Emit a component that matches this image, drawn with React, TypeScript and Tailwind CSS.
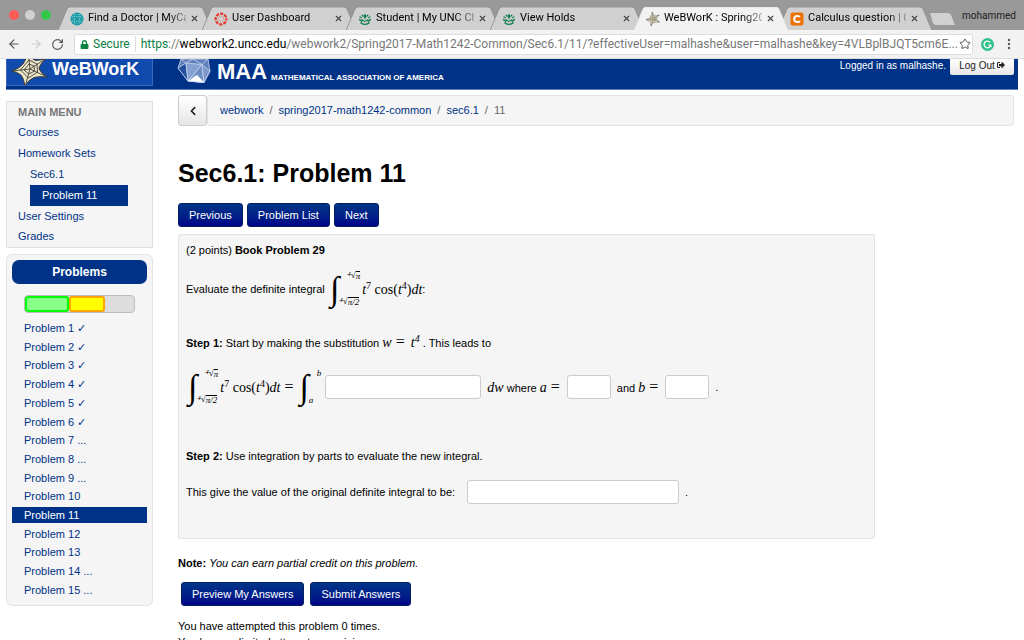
import type { ReactNode } from "react";
import { ArrowLeft, ArrowRight, RotateCw, Star, X } from "lucide-react";
import { FaChevronLeft, FaLock, FaSignOutAlt } from "react-icons/fa";

interface TabProps {
  title: string;
  icon: ReactNode;
  active?: boolean;
}

const MyCareIcon = () => (
  <svg viewBox="0 0 14 14" className="size-[14px] shrink-0">
    <circle cx="7" cy="7" r="6.5" fill="#1b9aa5" />
    <g fill="none" stroke="#8fd3d6" strokeWidth=".6">
      <circle cx="7" cy="7" r="4.6" strokeDasharray="1 1" />
      <circle cx="7" cy="7" r="2.4" strokeDasharray="1 1" />
      <path d="M2 4.5h10M2 9.5h10M4.5 2v10M9.5 2v10" strokeDasharray="1 1" />
    </g>
  </svg>
);

const CanvasIcon = () => (
  <svg viewBox="0 0 14 14" className="size-[14px] shrink-0">
    <circle cx="7" cy="7" r="5.4" fill="none" stroke="#e23b2e" strokeWidth="2.2" strokeDasharray="3.2 1.04" strokeDashoffset="1.6" />
    <circle cx="7" cy="7" r="2.9" fill="none" stroke="#e23b2e" strokeWidth=".9" strokeDasharray=".9 1.38" />
  </svg>
);

const UncIcon = () => (
  <svg viewBox="0 0 14 14" className="size-[14px] shrink-0" fill="none" stroke="#0c7a4a">
    <path d="M1 7.500c2 0 2.500 1.500 3 2.500M13 7.500c-2 0-2.500 1.500-3 2.500" strokeWidth="1.3" />
    <path d="M2.500 10.500c2 2.500 7 2.500 9 0" strokeWidth="1.3" />
    <path d="M4 7c.6 3 5.400 3 6 0" strokeWidth="1.1" />
    <path d="M1.500 4.800l2.500 1M12.500 4.800l-2.500 1M3.800 2.800l1.700 1.700M10.200 2.800L8.500 4.500" strokeWidth="1.2" />
    <path d="M7 1.5l1.4 2.4L7 7.8 5.6 3.9z" fill="#0c7a4a" stroke="none" />
  </svg>
);

const CheggIcon = () => (
  <svg viewBox="0 0 14 14" className="size-[14px] shrink-0">
    <rect x=".5" y=".5" width="13" height="13" rx="2" fill="#eb7100" />
    <path d="M9.8 5.2C9 3.4 4.2 3.2 4.2 7s4.8 3.6 5.6 1.8" fill="none" stroke="#fff" strokeWidth="2" />
  </svg>
);

const WebIcon = ({ className }: { className: string }) => (
  <svg viewBox="0 0 36 36" className={className}>
    <path
      d="M16 0Q18 8 24 9.500Q29 9 34 7.500Q27 14 27 18Q29 22 35 26Q25 25 21 27Q15 30 13 36Q12 27 9 24Q5 21 0 20Q8 17 11 13Q15 8 16 0z"
      fill="#ece6c8"
      stroke="#3d3d35"
      strokeWidth="1"
    />
    <g fill="none" stroke="#3d3d35" strokeWidth=".9">
      <path d="M18 18L16 0M18 18L34 7.500M18 18L35 26M18 18L13 36M18 18L0 20" />
      <path d="M17 13l5 2 .5 5-5.500 3-5-4z" />
      <path d="M17 9l8 4 .5 8-9 6-8-8z" />
    </g>
  </svg>
);

const MaaIcon = () => (
  <svg viewBox="0 0 36 25" className="h-[25px] w-9">
    <g stroke="#c9d6ee" strokeWidth=".8" strokeLinejoin="round">
      <path d="M4 0L1 9l10 13 16 1.500L33 12 31 0z" fill="#5f80bd" />
      <path d="M9 4L1 9l10 13z" fill="#23509d" />
      <path d="M9 4l16 1.500L11 22z" fill="#86a1d1" />
      <path d="M25 5.500L11 22l16 1.500z" fill="#6f8dc6" />
      <path d="M20 16L11 22l16 1.500z" fill="#fff" />
      <path d="M25 5.500L33 12l-6 11.500z" fill="#7c98cb" />
      <path d="M9 4l7-4M25 5.500L16 0M25 5.500L31 0M9 4L4 0" fill="none" />
    </g>
  </svg>
);

const Tab = ({ title, icon, active = false }: TabProps) => (
  <div className={`relative -mr-[10px] h-[23px] w-[154px] shrink-0 ${active ? "z-10" : ""}`}>
    <svg viewBox="0 0 154 23" preserveAspectRatio="none" className="absolute inset-0 h-full w-full">
      <path
        d="M0 23L1 21L9 2Q10 0 12 0H142Q144 0 145 2L153 21L154 23"
        fill={active ? "#f2f2f2" : "#d0d0d0"}
        stroke={active ? "#e4e4e4" : "#8a8a8a"}
        strokeWidth=".8"
      />
    </svg>
    <div className="relative flex h-full items-center gap-1 pl-3 pr-[13px]">
      {icon}
      <span className="min-w-0 flex-1 whitespace-nowrap bg-linear-to-r from-black from-80% to-black/30 bg-clip-text text-[11px] text-transparent">
        {title}
      </span>
      <button aria-label={`Close ${title}`}>
        <X className="size-[9px] text-[#444]" strokeWidth={3} />
      </button>
    </div>
  </div>
);

const BrowserBar = () => (
  <div className="shrink-0 font-['Roboto','Noto_Sans',sans-serif]">
    <div className="flex h-[30px] bg-[#999]">
      <div className="flex w-[58px] shrink-0 items-center gap-[6px] pl-[9px]">
        <span className="size-[10px] rounded-full bg-[#fc5b57]" />
        <span className="size-[10px] rounded-full bg-[#d0d0d0]" />
        <span className="size-[10px] rounded-full bg-[#34c84a]" />
      </div>
      <div className="flex items-end">
        <Tab title="Find a Doctor | MyCar" icon={<MyCareIcon />} />
        <Tab title="User Dashboard" icon={<CanvasIcon />} />
        <Tab title="Student | My UNC Cha" icon={<UncIcon />} />
        <Tab title="View Holds" icon={<UncIcon />} />
        <Tab title="WeBWorK : Spring201" icon={<WebIcon className="size-[14px] shrink-0" />} active />
        <Tab title="Calculus question | Ch" icon={<CheggIcon />} />
      </div>
      <svg viewBox="0 0 26 12" className="ml-[7px] mt-[13px] h-3 w-[26px] shrink-0">
        <path d="M1 0H19Q21 0 22 2L26 12H7Q5 12 4 10z" fill="#d0d0d0" />
      </svg>
      <span className="ml-auto mr-2 mt-2 text-[10px] leading-4 text-[#222]">mohammed</span>
    </div>
    <div className="flex h-[29px] items-center border-b border-[#ddd] bg-[#f2f2f2]">
      <div className="flex w-[74px] shrink-0 items-center gap-2 pl-[7px]">
        <button aria-label="Back"><ArrowLeft className="size-[14px] text-[#555]" /></button>
        <button aria-label="Forward"><ArrowRight className="size-[14px] text-[#ccc]" /></button>
        <button aria-label="Reload"><RotateCw className="size-[13px] text-[#555]" /></button>
      </div>
      <div className="flex h-[21px] min-w-0 flex-1 items-center rounded-xs border border-[#ddd] bg-white pl-[5px] pr-px text-[12px]">
        <FaLock className="size-[9px] shrink-0 text-[#0b8043]" />
        <span className="ml-1 text-[#0b8043]">Secure</span>
        <span className="mx-[5px] h-4 w-px bg-[#ddd]" />
        <span className="min-w-0 flex-1 whitespace-nowrap text-[#777]">
          <span className="text-[#0b8043]">https</span>://<span className="text-black">webwork2.uncc.edu</span>
          /webwork2/Spring2017-Math1242-Common/Sec6.1/11/?effectiveUser=malhashe&user=malhashe&key=4VLBplBJQT5cm6E...
        </span>
        <button aria-label="Bookmark this page"><Star className="size-3 text-[#555]" /></button>
      </div>
      <svg viewBox="0 0 12 12" className="ml-2 size-[13px] shrink-0">
        <circle cx="6" cy="6" r="6" fill="#2fc08b" />
        <path d="M8.500 4.200A3.100 3.100 0 1 0 9 6.500H6.800M9 6.500V8.500" fill="none" stroke="#fff" strokeWidth="1.200" />
      </svg>
      <button aria-label="Browser menu" className="mx-[13px]">
        <svg viewBox="0 0 4 14" className="h-[14px] w-1" fill="#555">
          <circle cx="2" cy="3" r="1.200" />
          <circle cx="2" cy="7" r="1.200" />
          <circle cx="2" cy="11" r="1.200" />
        </svg>
      </button>
    </div>
  </div>
);

const Header = () => (
  <header className="mx-[6px] flex h-[31px] items-start border-b border-[#5f7fc0] bg-[#003388] text-white">
    <a href="#" className="flex h-[27px] w-[147px] items-start gap-1 overflow-hidden border border-t-0 border-[#3a68bd] bg-[#104aad] pl-[5px]">
      <WebIcon className="-mt-2 size-9 shrink-0" />
      <span className="text-[18px] font-bold leading-5">WeBWorK</span>
    </a>
    <a href="#" className="ml-6 flex items-start font-bold">
      <MaaIcon />
      <span className="ml-1 text-[22px] leading-[26px]">MAA</span>
      <span className="ml-1 pt-[11px] text-[8px] leading-4">MATHEMATICAL ASSOCIATION OF AMERICA</span>
    </a>
    <div className="ml-auto mr-1 flex items-start gap-1 text-[10px]">
      <span className="leading-[14px]">Logged in as malhashe.</span>
      <button className="flex h-4 w-16 items-center justify-center gap-[2px] rounded-b-xs bg-linear-to-b from-white to-[#e6e6e6] pb-1 text-[#222]">
        Log Out <FaSignOutAlt className="size-2" />
      </button>
    </div>
  </header>
);

const MainMenu = () => (
  <nav className="flex flex-col border border-[#e0e0e0] bg-[#f5f5f5] px-[11px] text-[11px] leading-[21px] text-[#003388]">
    <h2 className="font-bold leading-5 text-[#777]">MAIN MENU</h2>
    <a href="#">Courses</a>
    <a href="#">Homework Sets</a>
    <div className="flex flex-col pl-3 pr-[13px]">
      <a href="#">Sec6.1</a>
      <a href="#" className="bg-[#003388] pl-3 text-white">Problem 11</a>
    </div>
    <a href="#" className="leading-5">User Settings</a>
    <a href="#">Grades</a>
  </nav>
);

const problems = [
  "Problem 1 ✓",
  "Problem 2 ✓",
  "Problem 3 ✓",
  "Problem 4 ✓",
  "Problem 5 ✓",
  "Problem 6 ✓",
  "Problem 7 ...",
  "Problem 8 ...",
  "Problem 9 ...",
  "Problem 10",
  "Problem 11",
  "Problem 12",
  "Problem 13",
  "Problem 14 ...",
  "Problem 15 ...",
];

const ProblemsBox = () => (
  <section className="mt-[6px] rounded-md border border-[#e3e3e3] bg-[#f5f5f5] px-[5px] pb-[7px] pt-[5px]">
    <h2 className="rounded-[7px] bg-[#003388] text-center text-[12px] font-bold leading-6 text-white">Problems</h2>
    <div className="mx-3 mt-[11px] flex h-[18px] overflow-hidden rounded-[4px] border border-[#bbb] bg-[#ddd]">
      <span className="w-2/5 rounded-[3px] border-2 border-[#00ff00] bg-[#88ff88]" />
      <span className="w-1/3 rounded-[3px] border-2 border-[#ffa500] bg-[#ffff00]" />
    </div>
    <ul className="mt-[7px] flex h-[278px] flex-col justify-between text-[11px] leading-4 text-[#003388]">
      {problems.map((name) => (
        <li key={name}>
          <a href="#" className={`block pl-3 ${name === "Problem 11" ? "bg-[#003388] text-white" : ""}`}>
            {name}
          </a>
        </li>
      ))}
    </ul>
  </section>
);

const NavButton = ({ children }: { children: ReactNode }) => (
  <button className="h-6 rounded-[3px] border border-[#00205f] bg-linear-to-b from-[#003388] to-[#000088] px-[10px] text-[11px] text-white">
    {children}
  </button>
);

const Root = ({ children }: { children: ReactNode }) => (
  <span className="flex items-start">
    <span className="text-[7px] leading-[6px]">4</span>
    <span className="not-italic">√</span>
    <span className="border-t border-black">{children}</span>
  </span>
);

const Integral = ({ upper, lower }: { upper: ReactNode; lower: ReactNode }) => (
  <span className="ml-[2px] flex h-10 items-center font-['Liberation_Serif',serif]">
    <span className="text-[34px] italic leading-10">∫</span>
    <span className="flex h-9 flex-col justify-between text-[9px] italic leading-[9px]">
      <span className="pl-2">{upper}</span>
      <span>{lower}</span>
    </span>
  </span>
);

const Sym = ({ children }: { children: ReactNode }) => (
  <span className="font-['Liberation_Serif',serif] text-[14px] italic">{children}</span>
);

const Equals = () => <span className="ml-1 font-['Liberation_Serif',serif] text-[16px] leading-4">=</span>;

const Power = ({ children }: { children: ReactNode }) => (
  <sup className="font-['Liberation_Serif',serif] text-[10px]">{children}</sup>
);

const Integrand = () => (
  <span className="ml-[2px] font-['Liberation_Serif',serif] text-[14px]">
    <i>t</i>
    <Power>7</Power> cos(<i>t</i>
    <Power>4</Power>)<i>dt</i>
  </span>
);

const answerClass = "h-6 rounded-[3px] border border-[#ccc] bg-white px-1";

const ProblemPanel = () => (
  <section className="mt-[7px] w-10/12 rounded-xs border border-[#e3e3e3] bg-[#f5f5f5] px-[7px] pb-[34px] pt-[7px]">
    <p className="leading-4">(2 points) <b>Book Problem 29</b></p>
    <p className="mt-[11px] flex h-10 items-center">
      Evaluate the definite integral&nbsp;
      <Integral upper={<Root>π</Root>} lower={<Root>π/2</Root>} />
      <Integrand />:
    </p>
    <p className="mt-6 h-5 leading-5">
      <b>Step 1:</b> Start by making the substitution <Sym>w</Sym>
      <Equals />&nbsp; <Sym>t<Power>4</Power></Sym> . This leads to
    </p>
    <div className="mt-[14px] flex h-10 items-center">
      <Integral upper={<Root>π</Root>} lower={<Root>π/2</Root>} />
      <Integrand />
      <Equals />
      <span className="ml-1">
        <Integral upper="b" lower="a" />
      </span>
      <input aria-label="Integrand in w" className={`${answerClass} ml-1 w-[156px]`} />
      <label htmlFor="limit-a" className="ml-[6px] mr-[7px]"><Sym>dw</Sym> where <Sym>a</Sym><Equals /></label>
      <input id="limit-a" className={`${answerClass} w-11`} />
      <label htmlFor="limit-b" className="ml-[6px] mr-[7px]">and <Sym>b</Sym><Equals /></label>
      <input id="limit-b" className={`${answerClass} w-11`} />
      <span className="ml-[6px]">.</span>
    </div>
    <p className="mt-[41px] leading-4"><b>Step 2:</b> Use integration by parts to evaluate the new integral.</p>
    <div className="mt-4 flex items-center">
      <label htmlFor="final-value" className="mr-3">This give the value of the original definite integral to be:</label>
      <input id="final-value" className={`${answerClass} w-[212px]`} />
      <span className="ml-[6px]">.</span>
    </div>
  </section>
);

export default function App() {
  return (
    <div className="flex h-screen flex-col overflow-hidden bg-white font-['Liberation_Sans',Arial,sans-serif] text-[11px] text-black">
      <BrowserBar />
      <div className="min-h-0 flex-1 overflow-hidden">
        <Header />
        <div className="mx-[6px] flex">
          <aside className="mt-[11px] w-[147px] shrink-0">
            <MainMenu />
            <ProblemsBox />
          </aside>
          <main className="ml-[25px] mr-1 mt-[5px] min-w-0 flex-1">
            {/* Breadcrumb */}
            <div className="flex h-[31px]">
              <button aria-label="Up one level" className="flex w-[29px] items-center justify-center rounded-[3px] border border-[#ccc] bg-linear-to-b from-white to-[#e6e6e6]">
                <FaChevronLeft className="size-[10px] text-[#222]" />
              </button>
              <nav className="flex flex-1 items-center gap-[6px] rounded-[3px] border border-[#e3e3e3] bg-[#f5f5f5] pl-3 text-[11px] text-[#666]">
                <a href="#" className="text-[#003388]">webwork</a>
                <span>/</span>
                <a href="#" className="text-[#003388]">spring2017-math1242-common</a>
                <span>/</span>
                <a href="#" className="text-[#003388]">sec6.1</a>
                <span>/</span>
                <span>11</span>
              </nav>
            </div>

            <h1 className="mt-[31px] text-[25px] font-bold leading-8">Sec6.1: Problem 11</h1>

            <div className="mt-[14px] flex gap-1">
              <NavButton>Previous</NavButton>
              <NavButton>Problem List</NavButton>
              <NavButton>Next</NavButton>
            </div>

            <ProblemPanel />

            <p className="mt-4 leading-4"><b>Note:</b> <i>You can earn partial credit on this problem.</i></p>
            <div className="mt-[11px] flex gap-[6px] pl-[3px]">
              <NavButton>Preview My Answers</NavButton>
              <NavButton>Submit Answers</NavButton>
            </div>
            <p className="mt-3 leading-4">
              You have attempted this problem 0 times.
              <br />
              You have unlimited attempts remaining.
            </p>
          </main>
        </div>
      </div>
    </div>
  );
}
